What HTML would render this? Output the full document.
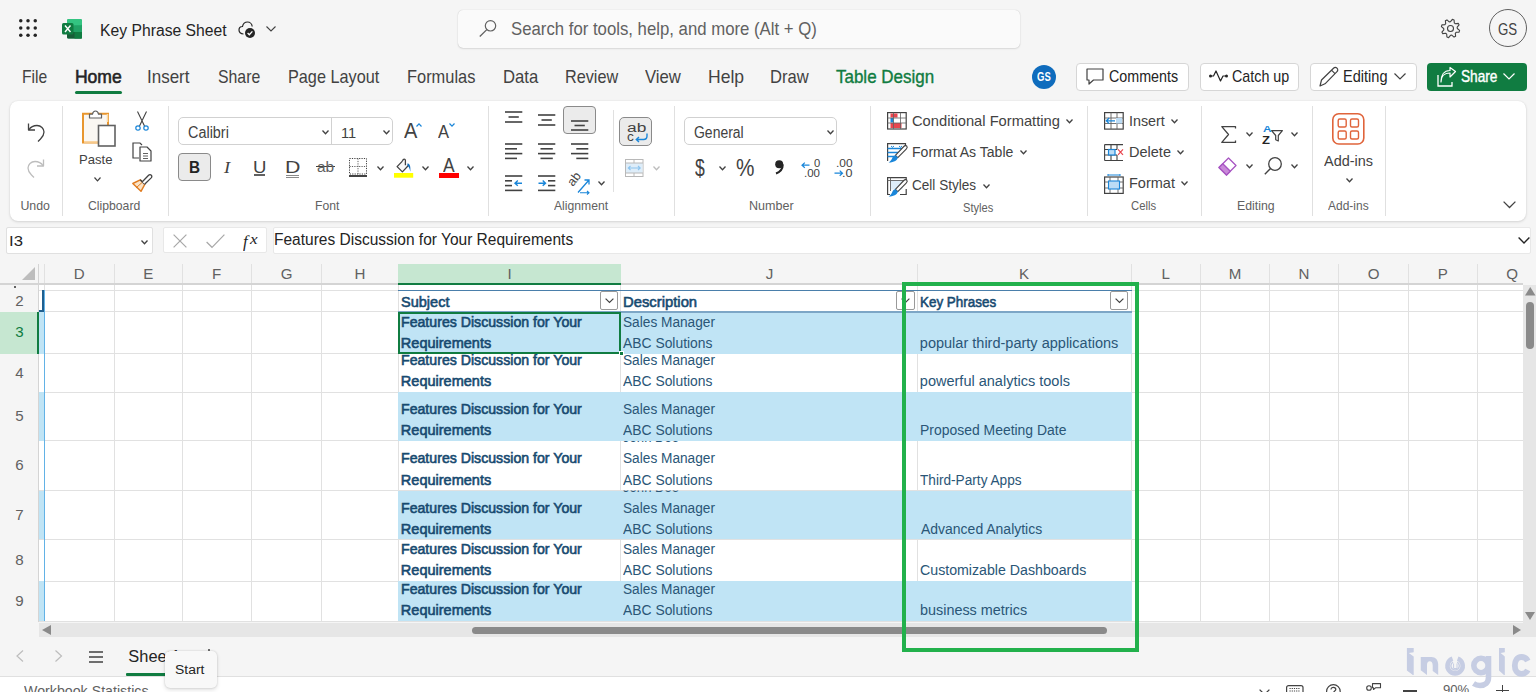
<!DOCTYPE html>
<html><head><meta charset="utf-8"><style>
html,body{margin:0;padding:0;}
body{width:1536px;height:692px;overflow:hidden;position:relative;background:#f5f5f5;font-family:"Liberation Sans",sans-serif;}
.t{position:absolute;white-space:nowrap;line-height:1;transform-origin:0 0;}
svg{overflow:visible}
</style></head><body>
<svg style="position:absolute;left:19px;top:19px;" width="18" height="18" viewBox="0 0 18 18" fill="none"><circle cx="1.75" cy="1.75" r="1.75" fill="#242424"/><circle cx="1.75" cy="9.0" r="1.75" fill="#242424"/><circle cx="1.75" cy="16.25" r="1.75" fill="#242424"/><circle cx="9.0" cy="1.75" r="1.75" fill="#242424"/><circle cx="9.0" cy="9.0" r="1.75" fill="#242424"/><circle cx="9.0" cy="16.25" r="1.75" fill="#242424"/><circle cx="16.25" cy="1.75" r="1.75" fill="#242424"/><circle cx="16.25" cy="9.0" r="1.75" fill="#242424"/><circle cx="16.25" cy="16.25" r="1.75" fill="#242424"/></svg>
<svg style="position:absolute;left:62px;top:19px;" width="21" height="20" viewBox="0 0 21 20" fill="none"><rect x="5" y="0" width="15" height="19.5" rx="1.5" fill="#21a366"/>
<rect x="5" y="0" width="15" height="6.5" fill="#33c481" rx="1.5"/>
<rect x="12.5" y="6.5" width="7.5" height="6.5" fill="#21a366"/>
<rect x="5" y="13" width="15" height="6.5" fill="#185c37" rx="1.5"/>
<rect x="12.5" y="13" width="7.5" height="6.5" fill="#107c41"/>
<rect x="0" y="4" width="11.5" height="11.5" rx="1.5" fill="#107c41"/>
<path d="M3 6.5 L8.5 13 M8.5 6.5 L3 13" stroke="#fff" stroke-width="1.4"/></svg>
<svg style="position:absolute;left:238px;top:21px;" width="18" height="17" viewBox="0 0 18 17" fill="none"><path d="M5.5 13 C2.5 13 1 11 1 9 C1 7 2.5 5.5 4.5 5.5 C5 3 7 1 9.5 1 C12 1 14 3 14.2 5.5" stroke="#242424" stroke-width="1.2" fill="none"/>
<circle cx="12" cy="12" r="5" fill="#242424"/><path d="M9.6 12 L11.3 13.7 L14.4 10.4" stroke="#fff" stroke-width="1.3" fill="none"/></svg>
<svg style="position:absolute;left:266px;top:26px;" width="10" height="6" viewBox="0 0 10 6" fill="none"><path d="M0.5 0.5 L5 5 L9.5 0.5" stroke="#424242" stroke-width="1.1"/></svg>
<div style="position:absolute;left:458px;top:9.5px;width:562px;height:38.5px;background:#fafafa;border-radius:5px;box-shadow:0 0 1px rgba(0,0,0,.22),0 1px 2px rgba(0,0,0,.10);"></div>
<svg style="position:absolute;left:479px;top:20px;" width="18" height="17" viewBox="0 0 18 17" fill="none"><circle cx="11.5" cy="5.8" r="5.2" stroke="#616161" stroke-width="1.2"/><path d="M7.8 9.6 L0.8 16.5" stroke="#616161" stroke-width="1.3"/></svg>
<svg style="position:absolute;left:1441px;top:19px;" width="19" height="19" viewBox="0 0 19 19" fill="none"><path d="M18.61 11.35 L18.08 13.09 L15.14 13.30 L14.29 14.33 L14.64 17.25 L13.03 18.11 L10.80 16.17 L9.48 16.30 L7.65 18.61 L5.91 18.08 L5.70 15.14 L4.67 14.29 L1.75 14.64 L0.89 13.03 L2.83 10.80 L2.70 9.48 L0.39 7.65 L0.92 5.91 L3.86 5.70 L4.71 4.67 L4.36 1.75 L5.97 0.89 L8.20 2.83 L9.52 2.70 L11.35 0.39 L13.09 0.92 L13.30 3.86 L14.33 4.71 L17.25 4.36 L18.11 5.97 L16.17 8.20 L16.30 9.52Z" stroke="#424242" stroke-width="1.1" stroke-linejoin="round"/><circle cx="9.5" cy="9.5" r="3" stroke="#424242" stroke-width="1.1"/></svg>
<div style="position:absolute;left:1489px;top:9px;width:38px;height:38px;border:1px solid #616161;border-radius:50%;box-sizing:border-box;"></div>
<div style="position:absolute;left:75.2px;top:91px;width:46.7px;height:3px;background:#107c41;border-radius:2px;"></div>
<div style="position:absolute;left:1032px;top:65px;width:24px;height:24px;background:#0f6cbd;border-radius:50%;"></div>
<div style="position:absolute;left:1075.6px;top:62.7px;width:113.4px;height:28.2px;background:#fff;border:1px solid #d6d6d6;border-radius:4px;box-sizing:border-box;"></div>
<div style="position:absolute;left:1199.5px;top:62.7px;width:99.5px;height:28.2px;background:#fff;border:1px solid #d6d6d6;border-radius:4px;box-sizing:border-box;"></div>
<div style="position:absolute;left:1309.5px;top:62.7px;width:107.8px;height:28.2px;background:#fff;border:1px solid #d6d6d6;border-radius:4px;box-sizing:border-box;"></div>
<div style="position:absolute;left:1427px;top:62.5px;width:100px;height:28.5px;background:#107c41;border-radius:4px;"></div>
<svg style="position:absolute;left:1086px;top:68px;" width="18" height="17" viewBox="0 0 18 17" fill="none"><path d="M1 1 H17 V12 H7.5 L3 16 V12 H1 Z" stroke="#424242" stroke-width="1.2" stroke-linejoin="round"/></svg>
<svg style="position:absolute;left:1209px;top:70px;" width="19" height="12" viewBox="0 0 19 12" fill="none"><circle cx="1.5" cy="6" r="1.5" fill="#242424"/><circle cx="17.5" cy="6" r="1.5" fill="#242424"/><path d="M1.5 6 H4.5 L7 1 L11.5 11 L14 6 H17.5" stroke="#242424" stroke-width="1.2" stroke-linejoin="round"/></svg>
<svg style="position:absolute;left:1319px;top:67px;" width="20" height="20" viewBox="0 0 20 20" fill="none"><path d="M1 19 L2.5 13 L14.5 1.2 C15.5 0.2 17 0.2 18 1.2 C19 2.2 19 3.7 18 4.7 L6 16.8 Z M12.5 3.2 L16 6.7" stroke="#424242" stroke-width="1.2" stroke-linejoin="round"/></svg>
<svg style="position:absolute;left:1394px;top:73px;" width="12" height="7" viewBox="0 0 12 7" fill="none"><path d="M0.5 0.5 L6 6 L11.5 0.5" stroke="#424242" stroke-width="1.2"/></svg>
<svg style="position:absolute;left:1437px;top:67px;" width="19" height="20" viewBox="0 0 19 20" fill="none"><path d="M1 8 V19 H15 V15" stroke="#fff" stroke-width="1.3"/><path d="M4 15 C4 9 8 6 13 6 V10 L18.5 4.5 L13 0.5 V3.5 C7 3.5 4 8 4 15Z" stroke="#fff" stroke-width="1.2" stroke-linejoin="round"/></svg>
<svg style="position:absolute;left:1503px;top:73px;" width="12" height="7" viewBox="0 0 12 7" fill="none"><path d="M0.5 0.5 L6 6 L11.5 0.5" stroke="#fff" stroke-width="1.2"/></svg>
<div style="position:absolute;left:9.7px;top:101px;width:1516.7px;height:120px;background:#fff;border-radius:8px;box-shadow:0 1px 3px rgba(0,0,0,.13),0 0 2px rgba(0,0,0,.07);"></div>
<div style="position:absolute;left:61.5px;top:106px;width:1px;height:110px;background:#e0e0e0;"></div>
<div style="position:absolute;left:167.5px;top:106px;width:1px;height:110px;background:#e0e0e0;"></div>
<div style="position:absolute;left:488px;top:106px;width:1px;height:110px;background:#e0e0e0;"></div>
<div style="position:absolute;left:613px;top:110px;width:1px;height:82px;background:#e0e0e0;"></div>
<div style="position:absolute;left:673.5px;top:106px;width:1px;height:110px;background:#e0e0e0;"></div>
<div style="position:absolute;left:869.5px;top:106px;width:1px;height:110px;background:#e0e0e0;"></div>
<div style="position:absolute;left:1086.5px;top:106px;width:1px;height:110px;background:#e0e0e0;"></div>
<div style="position:absolute;left:1201px;top:106px;width:1px;height:110px;background:#e0e0e0;"></div>
<div style="position:absolute;left:1311.5px;top:106px;width:1px;height:110px;background:#e0e0e0;"></div>
<div style="position:absolute;left:1385px;top:106px;width:1px;height:110px;background:#e0e0e0;"></div>
<svg style="position:absolute;left:27px;top:122px;" width="18" height="20" viewBox="0 0 18 20" fill="none"><path d="M1.5 1.5 V8 H8" stroke="#424242" stroke-width="1.3" fill="none" stroke-linejoin="round"/><path d="M1.8 7.8 C4 4.5 7 3.5 10 3.5 C14 3.5 17 6.5 17 10 C17 13 15.5 15 13.5 17 L11 19.5" stroke="#424242" stroke-width="1.3" fill="none"/></svg>
<svg style="position:absolute;left:27px;top:158px;" width="18" height="20" viewBox="0 0 18 20" fill="none"><path d="M16.5 1.5 V8 H10" stroke="#bdbdbd" stroke-width="1.3" fill="none" stroke-linejoin="round"/><path d="M16.2 7.8 C14 4.5 11 3.5 8 3.5 C4 3.5 1 6.5 1 10 C1 13 2.5 15 4.5 17 L7 19.5" stroke="#bdbdbd" stroke-width="1.3" fill="none"/></svg>
<svg style="position:absolute;left:82px;top:110px;" width="35" height="37" viewBox="0 0 35 37" fill="none"><path d="M1 3.8 H26 V32.6 H1 Z" fill="#faf7f2" stroke="#e8962e" stroke-width="2"/>
<path d="M25.5 4 V12 M2 32 H16" stroke="#fbd9a6" stroke-width="1.6"/>
<path d="M7.5 8 V4.2 H10.5 C10.8 2.2 12 1 13.5 1 C15 1 16.2 2.2 16.5 4.2 H19.5 V8 Z" fill="#fff" stroke="#616161" stroke-width="1.2" stroke-linejoin="round"/>
<rect x="16.5" y="15.5" width="16.5" height="20.5" fill="#fff" stroke="#616161" stroke-width="1.6"/></svg>
<svg style="position:absolute;left:94px;top:177px;" width="7" height="5" viewBox="0 0 7 5" fill="none"><path d="M0.5 0.5 L3.5 3.8 L6.5 0.5" stroke="#424242" stroke-width="1.2"/></svg>
<svg style="position:absolute;left:135px;top:111px;" width="14" height="20" viewBox="0 0 14 20" fill="none"><path d="M2.5 0.5 L9.5 15 M11.5 0.5 L4.5 15" stroke="#424242" stroke-width="1.1"/><circle cx="3" cy="17" r="2.2" stroke="#1a86d9" stroke-width="1.2" fill="#fff"/><circle cx="11" cy="17" r="2.2" stroke="#1a86d9" stroke-width="1.2" fill="#fff"/></svg>
<svg style="position:absolute;left:132px;top:142px;" width="20" height="20" viewBox="0 0 20 20" fill="none"><path d="M7 16 H1 V1 H8 L10 3" stroke="#424242" stroke-width="1.2" fill="none"/><path d="M8 5 H15 L19 9 V19 H8 Z" stroke="#424242" stroke-width="1.2" fill="#fff" stroke-linejoin="round"/><path d="M11 11.5 H16 M11 14 H16 M11 16.5 H16" stroke="#616161" stroke-width="1"/></svg>
<svg style="position:absolute;left:132px;top:173px;" width="20" height="19" viewBox="0 0 20 19" fill="none"><path d="M0.8 10.5 L8.2 6.8 L12.8 11.3 L9 18.3 Z" fill="#fbe3c6" stroke="#e07b1f" stroke-width="1.4" stroke-linejoin="round"/><path d="M4 15 L10 9.5" stroke="#e07b1f" stroke-width="1"/><path d="M8.2 6.8 L12.8 11.3" stroke="#424242" stroke-width="1.3"/><path d="M10.3 8.8 L16.6 2.3 C17.4 1.5 18.6 1.5 19.3 2.2 C20 2.9 20 4.1 19.2 4.9 L12.6 11.2" stroke="#424242" stroke-width="1.3" fill="#fff"/></svg>
<div style="position:absolute;left:178px;top:117.3px;width:214.6px;height:28.2px;border:1px solid #d1d1d1;border-radius:5px;box-sizing:border-box;"></div>
<div style="position:absolute;left:330.9px;top:118px;width:1px;height:26.8px;background:#d1d1d1;"></div>
<svg style="position:absolute;left:321.5px;top:129.5px;" width="7" height="5" viewBox="0 0 7 5" fill="none"><path d="M0.5 0.5 L3.5 3.8 L6.5 0.5" stroke="#424242" stroke-width="1.3"/></svg>
<svg style="position:absolute;left:383px;top:129.5px;" width="7" height="5" viewBox="0 0 7 5" fill="none"><path d="M0.5 0.5 L3.5 3.8 L6.5 0.5" stroke="#424242" stroke-width="1.3"/></svg>
<svg style="position:absolute;left:416px;top:123.4px;" width="6" height="4" viewBox="0 0 6 4" fill="none"><path d="M0.5 3.5 L3 0.8 L5.5 3.5" stroke="#1a86d9" stroke-width="1.2"/></svg>
<svg style="position:absolute;left:449px;top:123.4px;" width="6" height="4" viewBox="0 0 6 4" fill="none"><path d="M0.5 0.5 L3 3.2 L5.5 0.5" stroke="#1a86d9" stroke-width="1.2"/></svg>
<div style="position:absolute;left:178px;top:153px;width:32.5px;height:28.4px;background:#ebebeb;border:1px solid #8a8a8a;border-radius:4px;box-sizing:border-box;"></div>
<div style="position:absolute;left:254px;top:174px;width:11px;height:1.6px;background:#616161;"></div>
<div style="position:absolute;left:286.4px;top:174.5px;width:13px;height:1.3px;background:#8a8a8a;"></div>
<div style="position:absolute;left:286.4px;top:177px;width:13px;height:1.3px;background:#8a8a8a;"></div>
<div style="position:absolute;left:316px;top:166.3px;width:19px;height:1.2px;background:#424242;"></div>
<svg style="position:absolute;left:349px;top:158px;" width="18" height="19" viewBox="0 0 18 19" fill="none"><rect x="0.5" y="0.5" width="17" height="15.5" stroke="#424242" stroke-width="1" stroke-dasharray="1.2 1.2"/><path d="M9 0.5 V16 M0.5 8.5 H17.5" stroke="#616161" stroke-width="1" stroke-dasharray="1.2 1.2"/><rect x="0" y="17" width="18" height="2" fill="#424242"/></svg>
<svg style="position:absolute;left:376.5px;top:166px;" width="7" height="5" viewBox="0 0 7 5" fill="none"><path d="M0.5 0.5 L3.5 3.8 L6.5 0.5" stroke="#424242" stroke-width="1.3"/></svg>
<svg style="position:absolute;left:394px;top:158px;" width="20" height="20" viewBox="0 0 20 20" fill="none"><path d="M8.4 3.1 L3.1 8.6 L8.4 13.9 L14.6 7.3" stroke="#424242" stroke-width="1.3" fill="#f8f8f8" stroke-linejoin="round"/><path d="M8.4 3.1 C8.8 1.8 9.5 1.1 10.2 1.1 C10.9 1.1 11.4 1.7 11.4 2.6 V7.3" stroke="#424242" stroke-width="1.3" fill="none"/><path d="M13.4 5.6 C15.6 5.6 16.8 8 16.3 13.8 C15.8 11 15 8.6 13.4 7.5 Z" fill="#0f6cbd"/><rect x="0" y="15" width="19.2" height="4.7" fill="#ffff00"/></svg>
<svg style="position:absolute;left:421.5px;top:166px;" width="7" height="5" viewBox="0 0 7 5" fill="none"><path d="M0.5 0.5 L3.5 3.8 L6.5 0.5" stroke="#424242" stroke-width="1.3"/></svg>
<div style="position:absolute;left:439px;top:173.2px;width:20px;height:4.5px;background:#ff0000;"></div>
<svg style="position:absolute;left:466.5px;top:166px;" width="7" height="5" viewBox="0 0 7 5" fill="none"><path d="M0.5 0.5 L3.5 3.8 L6.5 0.5" stroke="#424242" stroke-width="1.3"/></svg>
<svg style="position:absolute;left:505px;top:110.5px;" width="18" height="13" viewBox="0 0 18 13" fill="none"><path d="M0 1 H17.3" stroke="#424242" stroke-width="1.6"/><path d="M3.5 6 H13.8" stroke="#424242" stroke-width="1.6"/><path d="M0 11 H17.3" stroke="#424242" stroke-width="1.6"/></svg>
<svg style="position:absolute;left:538px;top:114px;" width="18" height="13" viewBox="0 0 18 13" fill="none"><path d="M0 1 H17.3" stroke="#424242" stroke-width="1.6"/><path d="M3.5 6 H13.8" stroke="#424242" stroke-width="1.6"/><path d="M0 11 H17.3" stroke="#424242" stroke-width="1.6"/></svg>
<div style="position:absolute;left:563.4px;top:106px;width:32.6px;height:28.3px;background:#ebebeb;border:1px solid #8a8a8a;border-radius:4px;box-sizing:border-box;"></div>
<svg style="position:absolute;left:571px;top:119.5px;" width="18" height="12" viewBox="0 0 18 12" fill="none"><path d="M0 1 H17.3" stroke="#424242" stroke-width="1.6"/><path d="M3.5 5.5 H13.8" stroke="#424242" stroke-width="1.6"/><path d="M0 10 H17.3" stroke="#424242" stroke-width="1.6"/></svg>
<svg style="position:absolute;left:505px;top:143px;" width="18" height="17" viewBox="0 0 18 17" fill="none"><path d="M0 1 H17.3" stroke="#424242" stroke-width="1.6"/><path d="M0 5.8 H12" stroke="#424242" stroke-width="1.6"/><path d="M0 10.6 H17.3" stroke="#424242" stroke-width="1.6"/><path d="M0 15.4 H12" stroke="#424242" stroke-width="1.6"/></svg>
<svg style="position:absolute;left:538px;top:143px;" width="18" height="17" viewBox="0 0 18 17" fill="none"><path d="M0 1 H17.3" stroke="#424242" stroke-width="1.6"/><path d="M2.5 5.8 H14.8" stroke="#424242" stroke-width="1.6"/><path d="M0 10.6 H17.3" stroke="#424242" stroke-width="1.6"/><path d="M2.5 15.4 H14.8" stroke="#424242" stroke-width="1.6"/></svg>
<svg style="position:absolute;left:571px;top:143px;" width="18" height="17" viewBox="0 0 18 17" fill="none"><path d="M0 1 H17.3" stroke="#424242" stroke-width="1.6"/><path d="M5.3 5.8 H17.3" stroke="#424242" stroke-width="1.6"/><path d="M0 10.6 H17.3" stroke="#424242" stroke-width="1.6"/><path d="M5.3 15.4 H17.3" stroke="#424242" stroke-width="1.6"/></svg>
<svg style="position:absolute;left:505px;top:174.5px;" width="18" height="17" viewBox="0 0 18 17" fill="none"><path d="M0 1 H17.3" stroke="#424242" stroke-width="1.6"/><path d="M0 5.8 H7" stroke="#424242" stroke-width="1.6"/><path d="M0 10.6 H7" stroke="#424242" stroke-width="1.6"/><path d="M0 15.4 H17.3" stroke="#424242" stroke-width="1.6"/><path d="M17 8.2 H10 M12.8 5.6 L10 8.2 L12.8 10.8" stroke="#1a86d9" stroke-width="1.4" fill="none"/></svg>
<svg style="position:absolute;left:538px;top:174.5px;" width="18" height="17" viewBox="0 0 18 17" fill="none"><path d="M0 1 H17.3" stroke="#424242" stroke-width="1.6"/><path d="M10 5.8 H17.3" stroke="#424242" stroke-width="1.6"/><path d="M10 10.6 H17.3" stroke="#424242" stroke-width="1.6"/><path d="M0 15.4 H17.3" stroke="#424242" stroke-width="1.6"/><path d="M0.5 8.2 H7.5 M4.7 5.6 L7.5 8.2 L4.7 10.8" stroke="#1a86d9" stroke-width="1.4" fill="none"/></svg>
<svg style="position:absolute;left:570px;top:173.5px;" width="21" height="20" viewBox="0 0 21 20" fill="none"><text x="0" y="0" font-family="Liberation Sans" font-size="12.5" fill="#424242" transform="translate(3,13) rotate(-52)">ab</text><path d="M8 18.5 L19 6 M14.5 6 H19 V10.5" stroke="#1a86d9" stroke-width="1.3" fill="none"/><path d="M10 18.8 H19 M17 17 L19 18.8 L17 20.5" stroke="#1a86d9" stroke-width="1.1" fill="none"/></svg>
<svg style="position:absolute;left:598px;top:181px;" width="7" height="5" viewBox="0 0 7 5" fill="none"><path d="M0.5 0.5 L3.5 3.8 L6.5 0.5" stroke="#424242" stroke-width="1.3"/></svg>
<div style="position:absolute;left:618.5px;top:117px;width:33.3px;height:29px;background:#ebebeb;border:1px solid #8a8a8a;border-radius:5px;box-sizing:border-box;"></div>
<svg style="position:absolute;left:635px;top:133px;" width="13" height="9" viewBox="0 0 13 9" fill="none"><path d="M12 0.5 V3 C12 5 10.5 6.5 8.5 6.5 H1.5 M4 4 L1.3 6.5 L4 9" stroke="#1a86d9" stroke-width="1.4" fill="none"/></svg>
<svg style="position:absolute;left:625px;top:158.5px;" width="19" height="18" viewBox="0 0 19 18" fill="none"><rect x="0.5" y="0.5" width="17.5" height="17" stroke="#b8b8b8" stroke-width="1"/><rect x="1" y="4" width="16.5" height="10" fill="#deedf9"/><path d="M0.5 4 H18 M0.5 14 H18 M9 0.5 V4 M9 14 V18" stroke="#b8b8b8" stroke-width="1"/><path d="M3.5 9 H15 M5.5 7 L3.3 9 L5.5 11 M13 7 L15.2 9 L13 11" stroke="#8cc4ee" stroke-width="1.1" fill="none"/></svg>
<svg style="position:absolute;left:652.5px;top:165.5px;" width="7" height="5" viewBox="0 0 7 5" fill="none"><path d="M0.5 0.5 L3.5 3.8 L6.5 0.5" stroke="#bdbdbd" stroke-width="1.3"/></svg>
<div style="position:absolute;left:683.5px;top:117.3px;width:153.3px;height:28.1px;border:1px solid #d1d1d1;border-radius:5px;box-sizing:border-box;"></div>
<svg style="position:absolute;left:827px;top:129.5px;" width="7" height="5" viewBox="0 0 7 5" fill="none"><path d="M0.5 0.5 L3.5 3.8 L6.5 0.5" stroke="#424242" stroke-width="1.3"/></svg>
<svg style="position:absolute;left:718.5px;top:165.5px;" width="7" height="5" viewBox="0 0 7 5" fill="none"><path d="M0.5 0.5 L3.5 3.8 L6.5 0.5" stroke="#424242" stroke-width="1.3"/></svg>
<svg style="position:absolute;left:774px;top:160px;" width="10" height="14" viewBox="0 0 10 14" fill="none"><circle cx="5.2" cy="4.3" r="4" fill="#242424"/><path d="M8.8 4.5 C8.8 8.5 6 12 2 13.5" stroke="#242424" stroke-width="2" fill="none"/></svg>
<svg style="position:absolute;left:801px;top:162px;" width="8.5" height="6.5" viewBox="0 0 8.5 6.5" fill="none"><path d="M8.5 3.2 H1 M3.8 0.6 L1 3.2 L3.8 5.8" stroke="#1a86d9" stroke-width="1.2" fill="none"/></svg>
<svg style="position:absolute;left:834px;top:169.5px;" width="9.5" height="6.5" viewBox="0 0 9.5 6.5" fill="none"><path d="M0.5 3.2 H8.5 M5.7 0.6 L8.5 3.2 L5.7 5.8" stroke="#1a86d9" stroke-width="1.2" fill="none"/></svg>
<svg style="position:absolute;left:886.7px;top:112px;" width="20" height="18" viewBox="0 0 20 18" fill="none"><rect x="0.6" y="0.6" width="18.6" height="16.4" stroke="#424242" stroke-width="1.2"/><rect x="3.5" y="1.5" width="7" height="4" fill="#e8464f"/><rect x="3.5" y="11" width="11" height="5" fill="#e8464f"/><rect x="3.5" y="6" width="3" height="4.5" fill="#1a86d9"/><path d="M0.6 6 H19 M0.6 11 H19 M6.5 0.6 V17 M13.5 0.6 V17" stroke="#616161" stroke-width="0.8"/></svg>
<svg style="position:absolute;left:1066px;top:118.5px;" width="7" height="5" viewBox="0 0 7 5" fill="none"><path d="M0.5 0.5 L3.5 3.8 L6.5 0.5" stroke="#424242" stroke-width="1.3"/></svg>
<svg style="position:absolute;left:886.7px;top:142.5px;" width="21" height="20" viewBox="0 0 21 20" fill="none"><path d="M18.5 5.5 V0.6 H0.6 V18" stroke="#424242" stroke-width="1.2" fill="none"/><path d="M0.6 5.5 H15 M0.6 9.5 H11 M0.6 13.5 H7" stroke="#1a86d9" stroke-width="1.6"/><path d="M4 3 L5.5 4.3 L7 3 M12 3 L13.5 4.3 L15 3" stroke="#1a86d9" stroke-width="1"/><path d="M16.8 3.5 C17.8 2.5 19.2 2.4 19.8 3.1 C20.4 3.8 20.2 5.1 19.2 6.1 L10.8 14.6 L8.4 12.3 Z" stroke="#424242" stroke-width="1.1" fill="#fff" stroke-linejoin="round"/><path d="M8.4 12.3 L10.8 14.6 C10.3 17.2 7.6 19.6 1.6 19.6 C3.6 18.2 4.8 16.4 5.4 14.8 C5.9 13.3 7 12.4 8.4 12.3Z" fill="#1a86d9"/></svg>
<svg style="position:absolute;left:1020px;top:149.5px;" width="7" height="5" viewBox="0 0 7 5" fill="none"><path d="M0.5 0.5 L3.5 3.8 L6.5 0.5" stroke="#424242" stroke-width="1.3"/></svg>
<svg style="position:absolute;left:886.7px;top:177px;" width="21" height="19" viewBox="0 0 21 19" fill="none"><path d="M19.2 6 V0.6 H0.6 V17.5 H3" stroke="#424242" stroke-width="1.2" fill="none"/><path d="M19.2 12 V17.5 H13" stroke="#424242" stroke-width="1.2" fill="none"/><rect x="3.5" y="3.5" width="12" height="9" fill="#deedf9"/><path d="M3.5 0.6 V14 M0.6 3.5 H19" stroke="#616161" stroke-width="0.9"/><path d="M16.8 3.5 C17.8 2.5 19.2 2.4 19.8 3.1 C20.4 3.8 20.2 5.1 19.2 6.1 L10.8 14.6 L8.4 12.3 Z" stroke="#424242" stroke-width="1.1" fill="#fff" stroke-linejoin="round"/><path d="M8.4 12.3 L10.8 14.6 C10.3 17.2 7.6 19.6 1.6 19.6 C3.6 18.2 4.8 16.4 5.4 14.8 C5.9 13.3 7 12.4 8.4 12.3Z" fill="#1a86d9"/></svg>
<svg style="position:absolute;left:982.6px;top:183.5px;" width="7" height="5" viewBox="0 0 7 5" fill="none"><path d="M0.5 0.5 L3.5 3.8 L6.5 0.5" stroke="#424242" stroke-width="1.3"/></svg>
<svg style="position:absolute;left:1103.7px;top:112px;" width="20" height="18" viewBox="0 0 20 18" fill="none"><rect x="0.6" y="0.6" width="18.6" height="16.5" stroke="#424242" stroke-width="1.2"/><path d="M0.6 6 H19 M0.6 11.5 H19 M7 0.6 V17 M13 0.6 V17" stroke="#616161" stroke-width="0.9"/><rect x="12" y="6" width="6" height="5.5" fill="#bcdcf5"/><path d="M11 8.8 H2.5 M5.2 6 L2.3 8.8 L5.2 11.6" stroke="#1a86d9" stroke-width="1.3" fill="none"/></svg>
<svg style="position:absolute;left:1171.3px;top:118.5px;" width="7" height="5" viewBox="0 0 7 5" fill="none"><path d="M0.5 0.5 L3.5 3.8 L6.5 0.5" stroke="#424242" stroke-width="1.3"/></svg>
<svg style="position:absolute;left:1103.7px;top:144px;" width="20" height="17" viewBox="0 0 20 17" fill="none"><path d="M0.6 0.6 H19 M0.6 16.5 H19 M0.6 0.6 V16.5 M0.6 5.5 H13 M0.6 11 H13 M7 0.6 V5.5 M7 11 V16.5 M13 0.6 V5.5 M13 11 V16.5" stroke="#424242" stroke-width="1.1"/><rect x="4.5" y="5.5" width="6.5" height="5.5" fill="#bcdcf5" stroke="#1a86d9" stroke-width="1.2"/><path d="M14 5.3 L19 10.8 M19 5.3 L14 10.8" stroke="#e8464f" stroke-width="1.2"/></svg>
<svg style="position:absolute;left:1176.5px;top:149.5px;" width="7" height="5" viewBox="0 0 7 5" fill="none"><path d="M0.5 0.5 L3.5 3.8 L6.5 0.5" stroke="#424242" stroke-width="1.3"/></svg>
<svg style="position:absolute;left:1103.7px;top:173.5px;" width="20" height="20" viewBox="0 0 20 20" fill="none"><rect x="0.6" y="3" width="18.6" height="16.4" stroke="#424242" stroke-width="1.2"/><path d="M0.6 8 H19 M0.6 14 H19 M6 3 V19.4 M14 3 V19.4" stroke="#616161" stroke-width="0.9"/><rect x="4.5" y="7" width="11" height="8" fill="#bcdcf5" stroke="#1a86d9" stroke-width="1.1"/><path d="M4 1 H16 M4 0 V2 M16 0 V2" stroke="#1a86d9" stroke-width="1"/></svg>
<svg style="position:absolute;left:1180.7px;top:180.5px;" width="7" height="5" viewBox="0 0 7 5" fill="none"><path d="M0.5 0.5 L3.5 3.8 L6.5 0.5" stroke="#424242" stroke-width="1.3"/></svg>
<svg style="position:absolute;left:1220.7px;top:126px;" width="15" height="17" viewBox="0 0 15 17" fill="none"><path d="M14.5 2.5 V0.6 H0.8 L7.5 8.5 L0.8 16.4 H14.5 V14.5" stroke="#424242" stroke-width="1.3" fill="none" stroke-linejoin="round"/></svg>
<svg style="position:absolute;left:1245.6px;top:132px;" width="7" height="5" viewBox="0 0 7 5" fill="none"><path d="M0.5 0.5 L3.5 3.8 L6.5 0.5" stroke="#424242" stroke-width="1.3"/></svg>
<svg style="position:absolute;left:1270.5px;top:130px;" width="12" height="12" viewBox="0 0 12 12" fill="none"><path d="M0.6 0.6 H11.4 L7.3 5.5 V11 L4.7 9.8 V5.5 Z" stroke="#424242" stroke-width="1.2" fill="none" stroke-linejoin="round"/></svg>
<svg style="position:absolute;left:1290.8px;top:132px;" width="7" height="5" viewBox="0 0 7 5" fill="none"><path d="M0.5 0.5 L3.5 3.8 L6.5 0.5" stroke="#424242" stroke-width="1.3"/></svg>
<svg style="position:absolute;left:1218.4px;top:157px;" width="19" height="19" viewBox="0 0 19 19" fill="none"><path d="M1 10.5 L10.5 1 L18 8.5 L8.5 18 Z" stroke="#a855c2" stroke-width="1.3" fill="none" stroke-linejoin="round"/><path d="M1 10.5 L4.8 6.7 L12.3 14.2 L8.5 18 Z" fill="#c98ad9" stroke="#a855c2" stroke-width="1.3" stroke-linejoin="round"/></svg>
<svg style="position:absolute;left:1245.6px;top:163.5px;" width="7" height="5" viewBox="0 0 7 5" fill="none"><path d="M0.5 0.5 L3.5 3.8 L6.5 0.5" stroke="#424242" stroke-width="1.3"/></svg>
<svg style="position:absolute;left:1264px;top:157px;" width="18" height="18" viewBox="0 0 18 18" fill="none"><circle cx="11" cy="7" r="6.3" stroke="#424242" stroke-width="1.3"/><path d="M6.5 11.5 L0.8 17.3" stroke="#424242" stroke-width="1.4"/></svg>
<svg style="position:absolute;left:1290.8px;top:163.5px;" width="7" height="5" viewBox="0 0 7 5" fill="none"><path d="M0.5 0.5 L3.5 3.8 L6.5 0.5" stroke="#424242" stroke-width="1.3"/></svg>
<svg style="position:absolute;left:1332px;top:112.5px;" width="33" height="32" viewBox="0 0 33 32" fill="none"><rect x="0.8" y="0.8" width="31" height="30.2" rx="6" stroke="#e0643b" stroke-width="1.6"/><rect x="6.2" y="6" width="8" height="8" rx="1.5" stroke="#e0643b" stroke-width="1.4"/><rect x="18.5" y="6" width="8" height="8" rx="1.5" stroke="#e0643b" stroke-width="1.4"/><rect x="6.2" y="18" width="8" height="8" rx="1.5" stroke="#e0643b" stroke-width="1.4"/><rect x="18.5" y="18" width="8" height="8" rx="1.5" stroke="#e0643b" stroke-width="1.4"/></svg>
<svg style="position:absolute;left:1345.6px;top:178.3px;" width="7" height="5" viewBox="0 0 7 5" fill="none"><path d="M0.5 0.5 L3.5 3.8 L6.5 0.5" stroke="#424242" stroke-width="1.3"/></svg>
<svg style="position:absolute;left:1503px;top:201px;" width="13" height="8" viewBox="0 0 13 8" fill="none"><path d="M0.6 0.6 L6.5 6.5 L12.4 0.6" stroke="#424242" stroke-width="1.3"/></svg>
<div style="position:absolute;left:5.5px;top:226.7px;width:147.8px;height:27.8px;background:#fff;border:1px solid #e0e0e0;border-radius:2px;box-sizing:border-box;"></div>
<svg style="position:absolute;left:140.6px;top:239.5px;" width="7" height="5" viewBox="0 0 7 5" fill="none"><path d="M0.5 0.5 L3.5 3.8 L6.5 0.5" stroke="#424242" stroke-width="1.3"/></svg>
<div style="position:absolute;left:163px;top:226.7px;width:104px;height:26.3px;background:#fff;border:1px solid #e8e8e8;border-radius:2px;box-sizing:border-box;"></div>
<svg style="position:absolute;left:173px;top:233.5px;" width="14" height="14" viewBox="0 0 14 14" fill="none"><path d="M0.6 0.6 L13.4 13.4 M13.4 0.6 L0.6 13.4" stroke="#a8a8a8" stroke-width="1.2"/></svg>
<svg style="position:absolute;left:206px;top:233.5px;" width="19" height="14" viewBox="0 0 19 14" fill="none"><path d="M0.6 8 L6 13.3 L18.4 0.6" stroke="#a8a8a8" stroke-width="1.2" fill="none"/></svg>
<div style="position:absolute;left:272.6px;top:226.7px;width:1258.6px;height:27.3px;background:#fff;border:1px solid #e8e8e8;border-radius:2px;box-sizing:border-box;"></div>
<svg style="position:absolute;left:1517.5px;top:237.2px;" width="12" height="7" viewBox="0 0 12 7" fill="none"><path d="M0.6 0.6 L6 6 L11.4 0.6" stroke="#242424" stroke-width="1.4"/></svg>
<div style="position:absolute;left:39px;top:284px;width:1484px;height:338px;background:#fff;"></div>
<div style="position:absolute;left:39px;top:290px;width:1484px;height:1px;background:#e1e1e1;"></div>
<div style="position:absolute;left:39px;top:311px;width:1484px;height:1px;background:#e1e1e1;"></div>
<div style="position:absolute;left:39px;top:353px;width:1484px;height:1px;background:#e1e1e1;"></div>
<div style="position:absolute;left:39px;top:392px;width:1484px;height:1px;background:#e1e1e1;"></div>
<div style="position:absolute;left:39px;top:440px;width:1484px;height:1px;background:#e1e1e1;"></div>
<div style="position:absolute;left:39px;top:490px;width:1484px;height:1px;background:#e1e1e1;"></div>
<div style="position:absolute;left:39px;top:539px;width:1484px;height:1px;background:#e1e1e1;"></div>
<div style="position:absolute;left:39px;top:581px;width:1484px;height:1px;background:#e1e1e1;"></div>
<div style="position:absolute;left:39px;top:621px;width:1484px;height:1px;background:#e1e1e1;"></div>
<div style="position:absolute;left:44px;top:264px;width:1px;height:358px;background:#e1e1e1;"></div>
<div style="position:absolute;left:114px;top:264px;width:1px;height:358px;background:#e1e1e1;"></div>
<div style="position:absolute;left:182px;top:264px;width:1px;height:358px;background:#e1e1e1;"></div>
<div style="position:absolute;left:251px;top:264px;width:1px;height:358px;background:#e1e1e1;"></div>
<div style="position:absolute;left:321px;top:264px;width:1px;height:358px;background:#e1e1e1;"></div>
<div style="position:absolute;left:398px;top:264px;width:1px;height:358px;background:#e1e1e1;"></div>
<div style="position:absolute;left:620px;top:264px;width:1px;height:358px;background:#e1e1e1;"></div>
<div style="position:absolute;left:917px;top:264px;width:1px;height:358px;background:#e1e1e1;"></div>
<div style="position:absolute;left:1131px;top:264px;width:1px;height:358px;background:#e1e1e1;"></div>
<div style="position:absolute;left:1200px;top:264px;width:1px;height:358px;background:#e1e1e1;"></div>
<div style="position:absolute;left:1269px;top:264px;width:1px;height:358px;background:#e1e1e1;"></div>
<div style="position:absolute;left:1338px;top:264px;width:1px;height:358px;background:#e1e1e1;"></div>
<div style="position:absolute;left:1408px;top:264px;width:1px;height:358px;background:#e1e1e1;"></div>
<div style="position:absolute;left:1477px;top:264px;width:1px;height:358px;background:#e1e1e1;"></div>
<div style="position:absolute;left:398px;top:311.5px;width:734px;height:42.0px;background:#c0e4f5;"></div>
<div style="position:absolute;left:39px;top:311.5px;width:5px;height:42.0px;background:#c0e4f5;"></div>
<div style="position:absolute;left:398px;top:392.3px;width:734px;height:48.69999999999999px;background:#c0e4f5;"></div>
<div style="position:absolute;left:39px;top:392.3px;width:5px;height:48.69999999999999px;background:#c0e4f5;"></div>
<div style="position:absolute;left:398px;top:490.6px;width:734px;height:48.69999999999993px;background:#c0e4f5;"></div>
<div style="position:absolute;left:39px;top:490.6px;width:5px;height:48.69999999999993px;background:#c0e4f5;"></div>
<div style="position:absolute;left:398px;top:581.4px;width:734px;height:39.89999999999998px;background:#c0e4f5;"></div>
<div style="position:absolute;left:39px;top:581.4px;width:5px;height:39.89999999999998px;background:#c0e4f5;"></div>
<div style="position:absolute;left:0px;top:283px;width:1523px;height:1.5px;background:#d4d4d4;"></div>
<div style="position:absolute;left:38px;top:264px;width:1px;height:358px;background:#d4d4d4;"></div>
<div style="position:absolute;left:44px;top:290px;width:1px;height:331px;background:#62b2e6;"></div>
<div style="position:absolute;left:42px;top:290px;width:2px;height:21px;background:#1f5f8f;"></div>
<div style="position:absolute;left:39px;top:309.5px;width:5px;height:2px;background:#1f5f8f;"></div>
<div style="position:absolute;left:14px;top:286px;width:2px;height:1.5px;background:#616161;"></div>
<div style="position:absolute;left:398px;top:264px;width:222.7px;height:19px;background:#c6e7d1;"></div>
<div style="position:absolute;left:398px;top:282.5px;width:222.7px;height:2px;background:#107c41;"></div>
<div style="position:absolute;left:0px;top:311.5px;width:38px;height:42px;background:#c6e7d1;"></div>
<div style="position:absolute;left:37px;top:311.5px;width:2px;height:42px;background:#107c41;"></div>
<svg style="position:absolute;left:22px;top:267px;" width="13" height="13" viewBox="0 0 13 13" fill="none"><path d="M13 0 V13 H0 Z" fill="#bdbdbd"/></svg>
<div style="position:absolute;left:398px;top:290px;width:734px;height:1.2px;background:#4a7fab;"></div>
<div style="position:absolute;left:398px;top:311px;width:734px;height:2px;background:#7da6c6;"></div>
<div style="position:absolute;left:599.5px;top:290.5px;width:18.5px;height:19px;background:#fff;border:1px solid #9a9a9a;border-radius:2px;box-sizing:border-box;z-index:6;"></div>
<svg style="position:absolute;left:604.5px;top:297.5px;z-index:7;" width="9" height="5" viewBox="0 0 9 5" fill="none"><path d="M0.6 0.6 L4.5 4.4 L8.4 0.6" stroke="#424242" stroke-width="1.2"/></svg>
<div style="position:absolute;left:896px;top:290.5px;width:18.5px;height:19px;background:#fff;border:1px solid #9a9a9a;border-radius:2px;box-sizing:border-box;z-index:6;"></div>
<svg style="position:absolute;left:901px;top:297.5px;z-index:7;" width="9" height="5" viewBox="0 0 9 5" fill="none"><path d="M0.6 0.6 L4.5 4.4 L8.4 0.6" stroke="#424242" stroke-width="1.2"/></svg>
<div style="position:absolute;left:1109.5px;top:290.5px;width:18.5px;height:19px;background:#fff;border:1px solid #9a9a9a;border-radius:2px;box-sizing:border-box;z-index:6;"></div>
<svg style="position:absolute;left:1114.5px;top:297.5px;z-index:7;" width="9" height="5" viewBox="0 0 9 5" fill="none"><path d="M0.6 0.6 L4.5 4.4 L8.4 0.6" stroke="#424242" stroke-width="1.2"/></svg>
<div style="position:absolute;left:398px;top:311.5px;width:223px;height:42.5px;border:2px solid #107c41;box-sizing:border-box;z-index:8;"></div>
<div style="position:absolute;left:618.5px;top:351px;width:5px;height:5px;background:#107c41;border:1px solid #fff;box-sizing:border-box;z-index:9;"></div>
<div style="position:absolute;left:902px;top:282px;width:237px;height:370px;border:4px solid #22b14c;box-sizing:border-box;z-index:20;"></div>
<div style="position:absolute;left:39px;top:622.5px;width:1497px;height:14.3px;background:#e6e6e6;"></div>
<svg style="position:absolute;left:42px;top:625px;" width="9" height="10" viewBox="0 0 9 10" fill="none"><path d="M0 5 L9 0 V10 Z" fill="#8a8a8a"/></svg>
<svg style="position:absolute;left:1513px;top:625px;" width="8" height="10" viewBox="0 0 8 10" fill="none"><path d="M8 5 L0 0 V10 Z" fill="#8a8a8a"/></svg>
<div style="position:absolute;left:472px;top:626.5px;width:635px;height:7.2px;background:#8a8a8a;border-radius:4px;"></div>
<div style="position:absolute;left:1523px;top:284.5px;width:13px;height:338px;background:#e6e6e6;"></div>
<svg style="position:absolute;left:1525px;top:287px;" width="10.5" height="8.5" viewBox="0 0 10.5 8.5" fill="none"><path d="M5.25 0 L10.5 8.5 H0 Z" fill="#8a8a8a"/></svg>
<svg style="position:absolute;left:1524.7px;top:612px;" width="10" height="8" viewBox="0 0 10 8" fill="none"><path d="M5 8 L10 0 H0 Z" fill="#8a8a8a"/></svg>
<div style="position:absolute;left:1526.3px;top:301.8px;width:7.3px;height:47.7px;background:#8a8a8a;border-radius:4px;"></div>
<svg style="position:absolute;left:15.5px;top:650px;" width="7.5" height="12" viewBox="0 0 7.5 12" fill="none"><path d="M7 0.5 L1 6 L7 11.5" stroke="#bdbdbd" stroke-width="1.2"/></svg>
<svg style="position:absolute;left:54.5px;top:650px;" width="7.5" height="12" viewBox="0 0 7.5 12" fill="none"><path d="M0.5 0.5 L6.5 6 L0.5 11.5" stroke="#bdbdbd" stroke-width="1.2"/></svg>
<svg style="position:absolute;left:89px;top:650.5px;" width="14" height="12" viewBox="0 0 14 12" fill="none"><path d="M0 1 H14 M0 6 H14 M0 11 H14" stroke="#424242" stroke-width="1.3"/></svg>
<div style="position:absolute;left:126px;top:673px;width:90px;height:3px;background:#107c41;border-radius:1px;"></div>
<div style="position:absolute;left:0px;top:676.2px;width:1536px;height:16px;background:#fff;border-top:1px solid #e0e0e0;box-sizing:border-box;"></div>
<div style="position:absolute;left:164.8px;top:650.6px;width:52.4px;height:37.1px;background:#f8f8f8;border-radius:5px;box-shadow:0 0 2px rgba(0,0,0,.18),0 2px 4px rgba(0,0,0,.12);z-index:15;"></div>
<svg style="position:absolute;left:1400px;top:640px;z-index:12;" width="136" height="50" viewBox="0 0 136 50" fill="none">
<path d="M6.9 7.9 H13.7 V12.3 L8.80 13.1 L13.7 16.5 V35 H12.90 L6.9 30.6 Z" fill="#c6cde3"/>
<path d="M20.75 17 H30 C35 16.2 38.2 19.5 38.2 24.5 V35 L32.7 31 V25.5 C32.7 22.8 31.5 21.3 29.8 21.3 C28 21.3 27 22.8 27 25 V35 L20.75 30.3 Z" fill="#c6cde3"/>
<path d="M52.5 18.66 A7.6 7.6 0 1 0 57.7 18.66" stroke="#c6cde3" stroke-width="4.6" fill="none"/>
<path d="M53 22.2 A4.2 4.2 0 1 0 57.2 22.2" stroke="#c6cde3" stroke-width="1.4" fill="none"/>
<path d="M53.6 23.5 V28.5 H57 V23.5" stroke="#c6cde3" stroke-width="1" fill="none"/>
<circle cx="81" cy="25.5" r="7.2" stroke="#c6cde3" stroke-width="5.6" fill="none"/>
<path d="M88.5 16 V37.5 C88.5 42.5 85 45.5 80 45.5 C77.5 45.5 75.5 44.8 73.5 43.5" stroke="#c6cde3" stroke-width="5.6" fill="none"/>
<path d="M99 7.9 H104.8 V12.3 L100.62 13.1 L104.8 16.5 V35 H104.00 L99 30.6 Z" fill="#c6cde3"/>
<path d="M127.8 21 C126.5 18.5 124.2 17 121.5 17 C116.8 17 114.8 21 114.8 25.5 C114.8 30 116.8 33.8 121.5 33.8 C124.2 33.8 126.5 32.5 127.8 30" stroke="#c6cde3" stroke-width="5.8" fill="none"/>
</svg>
<svg style="position:absolute;left:1258.5px;top:688.5px;z-index:3;" width="11" height="6" viewBox="0 0 11 6" fill="none"><path d="M0.6 0.6 L5.5 5.5 L10.4 0.6" stroke="#424242" stroke-width="1.3"/></svg>
<svg style="position:absolute;left:1286.4px;top:684.7px;z-index:3;" width="17.5" height="12" viewBox="0 0 17.5 12" fill="none"><rect x="0.6" y="0.6" width="16.4" height="11" rx="2" stroke="#424242" stroke-width="1.2"/><path d="M3.5 3.5 H14 M3.5 6 H14" stroke="#424242" stroke-width="1.2" stroke-dasharray="1.2 1"/></svg>
<svg style="position:absolute;left:1326.2px;top:683.7px;z-index:3;" width="15" height="15" viewBox="0 0 15 15" fill="none"><circle cx="7.4" cy="7.4" r="6.8" stroke="#424242" stroke-width="1.2"/><path d="M5 5.5 C5 4 6 3.3 7.4 3.3 C8.8 3.3 9.8 4.2 9.8 5.4 C9.8 7 7.5 7.2 7.5 9" stroke="#424242" stroke-width="1.2" fill="none"/></svg>
<svg style="position:absolute;left:1365.5px;top:682.5px;z-index:3;" width="16" height="10" viewBox="0 0 16 10" fill="none"><circle cx="3" cy="5" r="2.3" stroke="#424242" stroke-width="1.1"/><path d="M6.5 0.6 H14.5 V4.8 H9.5 L7.5 6.5 V4.8 H6.5 Z" stroke="#424242" stroke-width="1.1" stroke-linejoin="round"/></svg>
<div style="position:absolute;left:1403px;top:689.8px;width:13.7px;height:1.8px;background:#424242;z-index:3;"></div>
<div style="position:absolute;left:1495.8px;top:689.8px;width:13.6px;height:1.6px;background:#424242;z-index:3;"></div>
<div style="position:absolute;left:1501.8px;top:684.7px;width:1.6px;height:8px;background:#424242;z-index:3;"></div>
<div style="position:absolute;left:208.3px;top:649.3px;width:1.6px;height:1.6px;background:#424242;border-radius:1px;"></div>
<div class="t" style="left:99.99px;top:22.35px;font-size:17.06px;color:#242424;font-weight:400;font-family:'Liberation Sans';transform:scaleX(0.9217);z-index:5;">Key Phrase Sheet</div>
<div class="t" style="left:511.33px;top:21.06px;font-size:17.88px;color:#616161;font-weight:400;font-family:'Liberation Sans';transform:scaleX(0.9379);z-index:5;">Search for tools, help, and more (Alt + Q)</div>
<div class="t" style="left:1498.34px;top:21.81px;font-size:15.70px;color:#424242;font-weight:400;font-family:'Liberation Sans';transform:scaleX(0.8445);z-index:5;">GS</div>
<div class="t" style="left:22.35px;top:69.21px;font-size:17.59px;color:#424242;font-weight:400;font-family:'Liberation Sans';transform:scaleX(0.8899);z-index:5;">File</div>
<div class="t" style="left:74.89px;top:69.21px;font-size:17.59px;color:#242424;font-weight:400;font-family:'Liberation Sans';z-index:5;-webkit-text-stroke:0.55px #242424;">Home</div>
<div class="t" style="left:147.47px;top:69.21px;font-size:17.59px;color:#424242;font-weight:400;font-family:'Liberation Sans';transform:scaleX(0.9661);z-index:5;">Insert</div>
<div class="t" style="left:218.37px;top:69.21px;font-size:17.59px;color:#424242;font-weight:400;font-family:'Liberation Sans';transform:scaleX(0.8993);z-index:5;">Share</div>
<div class="t" style="left:287.70px;top:69.21px;font-size:17.59px;color:#424242;font-weight:400;font-family:'Liberation Sans';transform:scaleX(0.9241);z-index:5;">Page Layout</div>
<div class="t" style="left:407.09px;top:69.21px;font-size:17.59px;color:#424242;font-weight:400;font-family:'Liberation Sans';transform:scaleX(0.9333);z-index:5;">Formulas</div>
<div class="t" style="left:502.66px;top:69.21px;font-size:17.59px;color:#424242;font-weight:400;font-family:'Liberation Sans';transform:scaleX(0.9494);z-index:5;">Data</div>
<div class="t" style="left:564.70px;top:69.21px;font-size:17.59px;color:#424242;font-weight:400;font-family:'Liberation Sans';transform:scaleX(0.9221);z-index:5;">Review</div>
<div class="t" style="left:645.00px;top:69.21px;font-size:17.59px;color:#424242;font-weight:400;font-family:'Liberation Sans';transform:scaleX(0.9489);z-index:5;">View</div>
<div class="t" style="left:707.60px;top:69.21px;font-size:17.59px;color:#424242;font-weight:400;font-family:'Liberation Sans';transform:scaleX(0.9963);z-index:5;">Help</div>
<div class="t" style="left:770.17px;top:69.21px;font-size:17.59px;color:#424242;font-weight:400;font-family:'Liberation Sans';transform:scaleX(0.9429);z-index:5;">Draw</div>
<div class="t" style="left:836.36px;top:69.21px;font-size:17.59px;color:#107c41;font-weight:400;font-family:'Liberation Sans';transform:scaleX(0.9657);z-index:5;-webkit-text-stroke:0.35px #107c41;">Table Design</div>
<div class="t" style="left:1037.12px;top:72.11px;font-size:11.92px;color:#ffffff;font-weight:700;font-family:'Liberation Sans';transform:scaleX(0.7974);z-index:5;">GS</div>
<div class="t" style="left:1109.28px;top:69.46px;font-size:15.99px;color:#242424;font-weight:400;font-family:'Liberation Sans';transform:scaleX(0.8945);z-index:5;">Comments</div>
<div class="t" style="left:1232.29px;top:69.46px;font-size:15.99px;color:#242424;font-weight:400;font-family:'Liberation Sans';transform:scaleX(0.8944);z-index:5;">Catch up</div>
<div class="t" style="left:1343.34px;top:69.46px;font-size:15.99px;color:#242424;font-weight:400;font-family:'Liberation Sans';transform:scaleX(0.9099);z-index:5;">Editing</div>
<div class="t" style="left:1461.45px;top:69.46px;font-size:15.99px;color:#ffffff;font-weight:400;font-family:'Liberation Sans';transform:scaleX(0.8541);z-index:5;-webkit-text-stroke:0.4px #ffffff;">Share</div>
<div class="t" style="left:20.43px;top:200.44px;font-size:12.35px;color:#616161;font-weight:400;font-family:'Liberation Sans';z-index:5;">Undo</div>
<div class="t" style="left:88.39px;top:200.51px;font-size:11.92px;color:#616161;font-weight:400;font-family:'Liberation Sans';transform:scaleX(1.0251);z-index:5;">Clipboard</div>
<div class="t" style="left:314.83px;top:200.51px;font-size:11.92px;color:#616161;font-weight:400;font-family:'Liberation Sans';transform:scaleX(1.0209);z-index:5;">Font</div>
<div class="t" style="left:553.50px;top:200.51px;font-size:11.92px;color:#616161;font-weight:400;font-family:'Liberation Sans';transform:scaleX(1.0222);z-index:5;">Alignment</div>
<div class="t" style="left:749.00px;top:200.51px;font-size:11.92px;color:#616161;font-weight:400;font-family:'Liberation Sans';transform:scaleX(1.0537);z-index:5;">Number</div>
<div class="t" style="left:963.06px;top:201.56px;font-size:12.21px;color:#616161;font-weight:400;font-family:'Liberation Sans';transform:scaleX(0.9107);z-index:5;">Styles</div>
<div class="t" style="left:1131.24px;top:199.89px;font-size:12.65px;color:#616161;font-weight:400;font-family:'Liberation Sans';transform:scaleX(0.8932);z-index:5;">Cells</div>
<div class="t" style="left:1237.41px;top:200.51px;font-size:11.92px;color:#616161;font-weight:400;font-family:'Liberation Sans';transform:scaleX(1.0339);z-index:5;">Editing</div>
<div class="t" style="left:1328.20px;top:200.51px;font-size:11.92px;color:#616161;font-weight:400;font-family:'Liberation Sans';transform:scaleX(1.0061);z-index:5;">Add-ins</div>
<div class="t" style="left:78.95px;top:153.48px;font-size:13.37px;color:#424242;font-weight:400;font-family:'Liberation Sans';transform:scaleX(0.9804);z-index:5;">Paste</div>
<div class="t" style="left:187.68px;top:125.49px;font-size:15.84px;color:#424242;font-weight:400;font-family:'Liberation Sans';transform:scaleX(0.9114);z-index:5;">Calibri</div>
<div class="t" style="left:340.67px;top:126.35px;font-size:14.83px;color:#424242;font-weight:400;font-family:'Liberation Sans';transform:scaleX(0.9877);z-index:5;">11</div>
<div class="t" style="left:403.60px;top:120.25px;font-size:22.38px;color:#424242;font-weight:400;font-family:'Liberation Sans';transform:scaleX(0.8935);z-index:5;">A</div>
<div class="t" style="left:438.40px;top:124.06px;font-size:17.88px;color:#424242;font-weight:400;font-family:'Liberation Sans';transform:scaleX(0.9267);z-index:5;">A</div>
<div class="t" style="left:189.08px;top:159.16px;font-size:17.30px;color:#242424;font-weight:700;font-family:'Liberation Sans';transform:scaleX(0.8859);z-index:5;">B</div>
<div class="t" style="left:223.98px;top:159.16px;font-size:17.30px;color:#424242;font-weight:400;font-style:italic;font-family:'Liberation Serif';transform:scaleX(1.0674);z-index:5;">I</div>
<div class="t" style="left:252.70px;top:159.16px;font-size:17.30px;color:#424242;font-weight:400;font-family:'Liberation Sans';transform:scaleX(1.0766);z-index:5;">U</div>
<div class="t" style="left:284.69px;top:159.16px;font-size:17.30px;color:#424242;font-weight:400;font-family:'Liberation Sans';transform:scaleX(1.2334);z-index:5;">D</div>
<div class="t" style="left:317.38px;top:159.69px;font-size:14.53px;color:#616161;font-weight:400;font-family:'Liberation Sans';transform:scaleX(1.0624);z-index:5;">ab</div>
<div class="t" style="left:443.30px;top:156.26px;font-size:19.77px;color:#424242;font-weight:400;font-family:'Liberation Sans';transform:scaleX(0.8834);z-index:5;">A</div>
<div class="t" style="left:627.31px;top:122.34px;font-size:12.00px;color:#424242;font-weight:400;font-family:'Liberation Sans';transform:scaleX(1.4477);z-index:5;">ab</div>
<div class="t" style="left:627.45px;top:130.64px;font-size:12.00px;color:#424242;font-weight:400;font-family:'Liberation Sans';transform:scaleX(1.1364);z-index:5;">c</div>
<div class="t" style="left:693.60px;top:125.39px;font-size:15.84px;color:#424242;font-weight:400;font-family:'Liberation Sans';transform:scaleX(0.8830);z-index:5;">General</div>
<div class="t" style="left:694.82px;top:156.63px;font-size:23.70px;color:#424242;font-weight:400;font-family:'Liberation Sans';transform:scaleX(0.7404);z-index:5;">$</div>
<div class="t" style="left:736.18px;top:155.59px;font-size:24.70px;color:#424242;font-weight:400;font-family:'Liberation Sans';transform:scaleX(0.8390);z-index:5;">%</div>
<div class="t" style="left:813.66px;top:158.23px;font-size:11.30px;color:#424242;font-weight:400;font-family:'Liberation Sans';transform:scaleX(0.9933);z-index:5;">0</div>
<div class="t" style="left:803.97px;top:167.63px;font-size:11.30px;color:#424242;font-weight:400;font-family:'Liberation Sans';transform:scaleX(1.0152);z-index:5;">.00</div>
<div class="t" style="left:836.22px;top:158.23px;font-size:11.30px;color:#424242;font-weight:400;font-family:'Liberation Sans';transform:scaleX(1.0572);z-index:5;">.00</div>
<div class="t" style="left:842.37px;top:167.63px;font-size:11.30px;color:#424242;font-weight:400;font-family:'Liberation Sans';transform:scaleX(1.1127);z-index:5;">.0</div>
<div class="t" style="left:912.46px;top:113.20px;font-size:15.12px;color:#424242;font-weight:400;font-family:'Liberation Sans';transform:scaleX(0.9729);z-index:5;">Conditional Formatting</div>
<div class="t" style="left:911.87px;top:145.47px;font-size:14.68px;color:#424242;font-weight:400;font-family:'Liberation Sans';transform:scaleX(0.9584);z-index:5;">Format As Table</div>
<div class="t" style="left:912.32px;top:176.70px;font-size:15.12px;color:#424242;font-weight:400;font-family:'Liberation Sans';transform:scaleX(0.8975);z-index:5;">Cell Styles</div>
<div class="t" style="left:1129.11px;top:112.83px;font-size:15.55px;color:#424242;font-weight:400;font-family:'Liberation Sans';transform:scaleX(0.9219);z-index:5;">Insert</div>
<div class="t" style="left:1128.84px;top:144.10px;font-size:15.12px;color:#424242;font-weight:400;font-family:'Liberation Sans';transform:scaleX(0.9609);z-index:5;">Delete</div>
<div class="t" style="left:1128.84px;top:175.82px;font-size:14.97px;color:#424242;font-weight:400;font-family:'Liberation Sans';transform:scaleX(0.9687);z-index:5;">Format</div>
<div class="t" style="left:1262.76px;top:124.88px;font-size:9.00px;color:#1a86d9;font-weight:700;font-family:'Liberation Sans';transform:scaleX(1.3072);z-index:5;">A</div>
<div class="t" style="left:1262.34px;top:134.69px;font-size:11.00px;color:#242424;font-weight:700;font-family:'Liberation Sans';transform:scaleX(1.1802);z-index:5;">Z</div>
<div class="t" style="left:1324.20px;top:153.66px;font-size:14.10px;color:#424242;font-weight:400;font-family:'Liberation Sans';transform:scaleX(1.0257);z-index:5;">Add-ins</div>
<div class="t" style="left:9.20px;top:233.65px;font-size:14.83px;color:#242424;font-weight:400;font-family:'Liberation Sans';transform:scaleX(1.1244);z-index:5;">I3</div>
<div class="t" style="left:243.33px;top:232.61px;font-size:17.00px;color:#242424;font-weight:400;font-style:italic;font-family:'Liberation Serif';transform:scaleX(0.9804);z-index:5;">f</div>
<div class="t" style="left:249.84px;top:233.15px;font-size:14.00px;color:#242424;font-weight:400;font-style:italic;font-family:'Liberation Serif';transform:scaleX(1.2267);z-index:5;">x</div>
<div class="t" style="left:274.26px;top:231.09px;font-size:16.42px;color:#242424;font-weight:400;font-family:'Liberation Sans';transform:scaleX(0.9455);z-index:5;">Features Discussion for Your Requirements</div>
<div class="t" style="left:73.76px;top:266.00px;font-size:15.12px;color:#616161;font-weight:400;font-family:'Liberation Sans';z-index:5;">D</div>
<div class="t" style="left:143.13px;top:266.00px;font-size:15.12px;color:#616161;font-weight:400;font-family:'Liberation Sans';z-index:5;">E</div>
<div class="t" style="left:212.01px;top:266.00px;font-size:15.12px;color:#616161;font-weight:400;font-family:'Liberation Sans';z-index:5;">F</div>
<div class="t" style="left:280.76px;top:266.00px;font-size:15.12px;color:#616161;font-weight:400;font-family:'Liberation Sans';z-index:5;">G</div>
<div class="t" style="left:354.48px;top:266.00px;font-size:15.12px;color:#616161;font-weight:400;font-family:'Liberation Sans';z-index:5;">H</div>
<div class="t" style="left:507.38px;top:266.00px;font-size:15.12px;color:#616161;font-weight:400;font-family:'Liberation Sans';z-index:5;">I</div>
<div class="t" style="left:765.67px;top:266.00px;font-size:15.12px;color:#616161;font-weight:400;font-family:'Liberation Sans';z-index:5;">J</div>
<div class="t" style="left:1018.91px;top:266.00px;font-size:15.12px;color:#616161;font-weight:400;font-family:'Liberation Sans';z-index:5;">K</div>
<div class="t" style="left:1161.39px;top:266.00px;font-size:15.12px;color:#616161;font-weight:400;font-family:'Liberation Sans';z-index:5;">L</div>
<div class="t" style="left:1228.65px;top:266.00px;font-size:15.12px;color:#616161;font-weight:400;font-family:'Liberation Sans';z-index:5;">M</div>
<div class="t" style="left:1298.48px;top:266.00px;font-size:15.12px;color:#616161;font-weight:400;font-family:'Liberation Sans';z-index:5;">N</div>
<div class="t" style="left:1367.68px;top:266.00px;font-size:15.12px;color:#616161;font-weight:400;font-family:'Liberation Sans';z-index:5;">O</div>
<div class="t" style="left:1437.71px;top:266.00px;font-size:15.12px;color:#616161;font-weight:400;font-family:'Liberation Sans';z-index:5;">P</div>
<div class="t" style="left:1506.18px;top:266.00px;font-size:15.12px;color:#616161;font-weight:400;font-family:'Liberation Sans';z-index:5;">Q</div>
<div class="t" style="left:15.27px;top:292.90px;font-size:15.12px;color:#616161;font-weight:400;font-family:'Liberation Sans';z-index:5;">2</div>
<div class="t" style="left:15.34px;top:324.40px;font-size:15.12px;color:#107c41;font-weight:400;font-family:'Liberation Sans';z-index:5;">3</div>
<div class="t" style="left:15.34px;top:364.90px;font-size:15.12px;color:#616161;font-weight:400;font-family:'Liberation Sans';z-index:5;">4</div>
<div class="t" style="left:15.27px;top:408.40px;font-size:15.12px;color:#616161;font-weight:400;font-family:'Liberation Sans';z-index:5;">5</div>
<div class="t" style="left:15.19px;top:457.40px;font-size:15.12px;color:#616161;font-weight:400;font-family:'Liberation Sans';z-index:5;">6</div>
<div class="t" style="left:15.27px;top:506.90px;font-size:15.12px;color:#616161;font-weight:400;font-family:'Liberation Sans';z-index:5;">7</div>
<div class="t" style="left:15.27px;top:552.40px;font-size:15.12px;color:#616161;font-weight:400;font-family:'Liberation Sans';z-index:5;">8</div>
<div class="t" style="left:15.34px;top:593.40px;font-size:15.12px;color:#616161;font-weight:400;font-family:'Liberation Sans';z-index:5;">9</div>
<div class="t" style="left:401.42px;top:295.22px;font-size:14.97px;color:#174a70;font-weight:400;font-family:'Liberation Sans';transform:scaleX(0.9703);z-index:5;-webkit-text-stroke:0.6px #174a70;">Subject</div>
<div class="t" style="left:622.61px;top:295.22px;font-size:14.97px;color:#174a70;font-weight:400;font-family:'Liberation Sans';transform:scaleX(0.9898);z-index:5;-webkit-text-stroke:0.6px #174a70;">Description</div>
<div class="t" style="left:919.63px;top:294.18px;font-size:15.26px;color:#174a70;font-weight:400;font-family:'Liberation Sans';transform:scaleX(0.8804);z-index:5;-webkit-text-stroke:0.6px #174a70;">Key Phrases</div>
<div class="t" style="left:400.87px;top:315.29px;font-size:14.53px;color:#174a70;font-weight:400;font-family:'Liberation Sans';transform:scaleX(0.9744);z-index:5;-webkit-text-stroke:0.6px #174a70;">Features Discussion for Your</div>
<div class="t" style="left:400.83px;top:335.89px;font-size:14.53px;color:#174a70;font-weight:400;font-family:'Liberation Sans';z-index:5;-webkit-text-stroke:0.6px #174a70;">Requirements</div>
<div class="t" style="left:622.85px;top:315.29px;font-size:14.53px;color:#2a5677;font-weight:400;font-family:'Liberation Sans';transform:scaleX(0.9423);z-index:5;">Sales Manager</div>
<div class="t" style="left:623.40px;top:335.89px;font-size:14.53px;color:#2a5677;font-weight:400;font-family:'Liberation Sans';transform:scaleX(0.9562);z-index:5;">ABC Solutions</div>
<div class="t" style="left:919.83px;top:335.89px;font-size:14.53px;color:#2a5677;font-weight:400;font-family:'Liberation Sans';z-index:5;">popular third-party applications</div>
<div class="t" style="left:400.87px;top:353.49px;font-size:14.53px;color:#174a70;font-weight:400;font-family:'Liberation Sans';transform:scaleX(0.9744);z-index:5;-webkit-text-stroke:0.6px #174a70;">Features Discussion for Your</div>
<div class="t" style="left:400.83px;top:374.09px;font-size:14.53px;color:#174a70;font-weight:400;font-family:'Liberation Sans';z-index:5;-webkit-text-stroke:0.6px #174a70;">Requirements</div>
<div class="t" style="left:622.85px;top:353.49px;font-size:14.53px;color:#2a5677;font-weight:400;font-family:'Liberation Sans';transform:scaleX(0.9423);z-index:5;">Sales Manager</div>
<div class="t" style="left:623.40px;top:374.09px;font-size:14.53px;color:#2a5677;font-weight:400;font-family:'Liberation Sans';transform:scaleX(0.9562);z-index:5;">ABC Solutions</div>
<div class="t" style="left:919.83px;top:374.09px;font-size:14.53px;color:#2a5677;font-weight:400;font-family:'Liberation Sans';z-index:5;">powerful analytics tools</div>
<div class="t" style="left:400.87px;top:402.39px;font-size:14.53px;color:#174a70;font-weight:400;font-family:'Liberation Sans';transform:scaleX(0.9744);z-index:5;-webkit-text-stroke:0.6px #174a70;">Features Discussion for Your</div>
<div class="t" style="left:400.83px;top:423.09px;font-size:14.53px;color:#174a70;font-weight:400;font-family:'Liberation Sans';z-index:5;-webkit-text-stroke:0.6px #174a70;">Requirements</div>
<div class="t" style="left:622.85px;top:402.39px;font-size:14.53px;color:#2a5677;font-weight:400;font-family:'Liberation Sans';transform:scaleX(0.9423);z-index:5;">Sales Manager</div>
<div class="t" style="left:623.40px;top:423.09px;font-size:14.53px;color:#2a5677;font-weight:400;font-family:'Liberation Sans';transform:scaleX(0.9562);z-index:5;">ABC Solutions</div>
<div class="t" style="left:919.58px;top:423.09px;font-size:14.53px;color:#2a5677;font-weight:400;font-family:'Liberation Sans';transform:scaleX(0.9601);z-index:5;">Proposed Meeting Date</div>
<div class="t" style="left:400.87px;top:450.99px;font-size:14.53px;color:#174a70;font-weight:400;font-family:'Liberation Sans';transform:scaleX(0.9744);z-index:5;-webkit-text-stroke:0.6px #174a70;">Features Discussion for Your</div>
<div class="t" style="left:400.83px;top:472.59px;font-size:14.53px;color:#174a70;font-weight:400;font-family:'Liberation Sans';z-index:5;-webkit-text-stroke:0.6px #174a70;">Requirements</div>
<div class="t" style="left:622.85px;top:450.99px;font-size:14.53px;color:#2a5677;font-weight:400;font-family:'Liberation Sans';transform:scaleX(0.9423);z-index:5;">Sales Manager</div>
<div class="t" style="left:623.40px;top:472.59px;font-size:14.53px;color:#2a5677;font-weight:400;font-family:'Liberation Sans';transform:scaleX(0.9562);z-index:5;">ABC Solutions</div>
<div class="t" style="left:920.43px;top:472.59px;font-size:14.53px;color:#2a5677;font-weight:400;font-family:'Liberation Sans';transform:scaleX(0.9398);z-index:5;">Third-Party Apps</div>
<div class="t" style="left:400.87px;top:501.39px;font-size:14.53px;color:#174a70;font-weight:400;font-family:'Liberation Sans';transform:scaleX(0.9744);z-index:5;-webkit-text-stroke:0.6px #174a70;">Features Discussion for Your</div>
<div class="t" style="left:400.83px;top:521.59px;font-size:14.53px;color:#174a70;font-weight:400;font-family:'Liberation Sans';z-index:5;-webkit-text-stroke:0.6px #174a70;">Requirements</div>
<div class="t" style="left:622.85px;top:501.39px;font-size:14.53px;color:#2a5677;font-weight:400;font-family:'Liberation Sans';transform:scaleX(0.9423);z-index:5;">Sales Manager</div>
<div class="t" style="left:623.40px;top:521.59px;font-size:14.53px;color:#2a5677;font-weight:400;font-family:'Liberation Sans';transform:scaleX(0.9562);z-index:5;">ABC Solutions</div>
<div class="t" style="left:920.70px;top:521.59px;font-size:14.53px;color:#2a5677;font-weight:400;font-family:'Liberation Sans';transform:scaleX(0.9627);z-index:5;">Advanced Analytics</div>
<div class="t" style="left:400.87px;top:541.99px;font-size:14.53px;color:#174a70;font-weight:400;font-family:'Liberation Sans';transform:scaleX(0.9744);z-index:5;-webkit-text-stroke:0.6px #174a70;">Features Discussion for Your</div>
<div class="t" style="left:400.83px;top:562.99px;font-size:14.53px;color:#174a70;font-weight:400;font-family:'Liberation Sans';z-index:5;-webkit-text-stroke:0.6px #174a70;">Requirements</div>
<div class="t" style="left:622.85px;top:541.99px;font-size:14.53px;color:#2a5677;font-weight:400;font-family:'Liberation Sans';transform:scaleX(0.9423);z-index:5;">Sales Manager</div>
<div class="t" style="left:623.40px;top:562.99px;font-size:14.53px;color:#2a5677;font-weight:400;font-family:'Liberation Sans';transform:scaleX(0.9562);z-index:5;">ABC Solutions</div>
<div class="t" style="left:919.99px;top:562.99px;font-size:14.53px;color:#2a5677;font-weight:400;font-family:'Liberation Sans';transform:scaleX(0.9769);z-index:5;">Customizable Dashboards</div>
<div class="t" style="left:400.87px;top:581.69px;font-size:14.53px;color:#174a70;font-weight:400;font-family:'Liberation Sans';transform:scaleX(0.9744);z-index:5;-webkit-text-stroke:0.6px #174a70;">Features Discussion for Your</div>
<div class="t" style="left:400.83px;top:602.69px;font-size:14.53px;color:#174a70;font-weight:400;font-family:'Liberation Sans';z-index:5;-webkit-text-stroke:0.6px #174a70;">Requirements</div>
<div class="t" style="left:622.85px;top:581.69px;font-size:14.53px;color:#2a5677;font-weight:400;font-family:'Liberation Sans';transform:scaleX(0.9423);z-index:5;">Sales Manager</div>
<div class="t" style="left:623.40px;top:602.69px;font-size:14.53px;color:#2a5677;font-weight:400;font-family:'Liberation Sans';transform:scaleX(0.9562);z-index:5;">ABC Solutions</div>
<div class="t" style="left:919.84px;top:602.69px;font-size:14.53px;color:#2a5677;font-weight:400;font-family:'Liberation Sans';transform:scaleX(0.9913);z-index:5;">business metrics</div>
<div class="t" style="left:623.27px;top:430.19px;font-size:14.53px;color:#2a5677;font-weight:400;font-family:'Liberation Sans';transform:scaleX(0.9033);z-index:5;clip-path:inset(10.81px 0 0 0);">John Doe</div>
<div class="t" style="left:623.27px;top:479.69px;font-size:14.53px;color:#2a5677;font-weight:400;font-family:'Liberation Sans';transform:scaleX(0.9033);z-index:5;clip-path:inset(10.91px 0 0 0);">John Doe</div>
<div class="t" style="left:128.34px;top:647.99px;font-size:16.42px;color:#242424;font-weight:400;font-family:'Liberation Sans';z-index:5;">Sheet1</div>
<div class="t" style="left:175.24px;top:663.03px;font-size:13.66px;color:#242424;font-weight:400;font-family:'Liberation Sans';transform:scaleX(1.0199);z-index:16;">Start</div>
<div class="t" style="left:23.75px;top:683.69px;font-size:14.53px;color:#616161;font-weight:400;font-family:'Liberation Sans';transform:scaleX(0.9790);z-index:5;">Workbook Statistics</div>
<div class="t" style="left:1443.47px;top:683.67px;font-size:12.79px;color:#616161;font-weight:400;font-family:'Liberation Sans';transform:scaleX(1.0277);z-index:3;">90%</div>
</body></html>
